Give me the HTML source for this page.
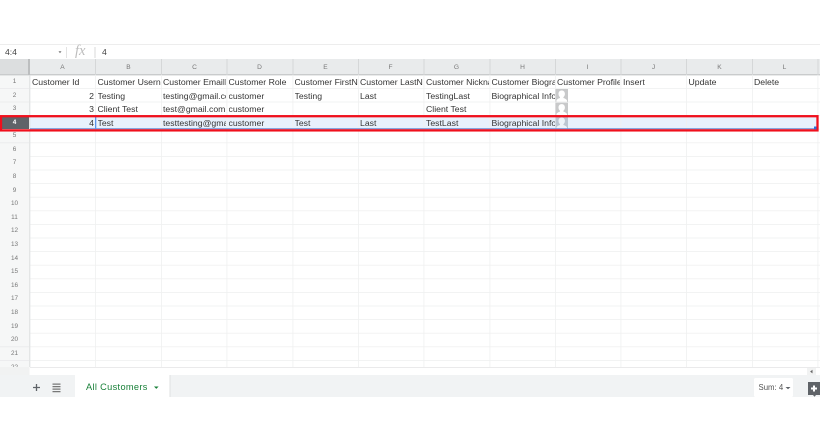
<!DOCTYPE html>
<html><head><meta charset="utf-8"><style>
html,body{margin:0;padding:0;background:#fff}
#p{position:relative;width:820px;height:441px;overflow:hidden;background:#fff;font-family:"Liberation Sans",sans-serif;filter:blur(.3px)}
#p svg{position:absolute;left:0;top:0}
.c{position:absolute;height:13px;line-height:13px;font-size:8.7px;color:#353535;white-space:nowrap;overflow:hidden}
.h{position:absolute;top:61px;height:14px;line-height:14px;font-size:6.6px;color:#777;text-align:center}
.n{position:absolute;left:0;width:29px;height:12px;line-height:12px;font-size:6.4px;color:#777;text-align:center}
</style></head><body><div id="p">
<svg width="820" height="441" viewBox="0 0 820 441">
<rect x="0" y="44" width="820" height="1" fill="#ededed"/>
<rect x="0" y="59" width="820" height="16" fill="#e9ebec"/>
<rect x="0" y="59" width="29" height="16" fill="#dcdedf"/>
<rect x="0" y="75" width="29.5" height="300" fill="#f6f7f7"/>
<rect x="0" y="74" width="820" height="1.4" fill="#c9cbcc"/>
<rect x="28" y="59" width="2" height="16" fill="#bcbebf"/>
<rect x="66" y="47" width="1" height="11" fill="#e3e3e3"/>
<rect x="94.500" y="47" width="1" height="11" fill="#d8d8d8"/>
<!-- selected row -->
<rect x="30" y="116" width="788" height="13" fill="#e8f1fc"/>
<rect x="0" y="116" width="29" height="13" fill="#5f6368"/>
<!-- grid -->
<g fill="#eff0f0">
<rect x="30" y="88" width="790" height=".8"/><rect x="30" y="101.6" width="790" height=".8"/><rect x="30" y="115.2" width="790" height=".8"/><rect x="30" y="128.8" width="790" height=".8"/><rect x="30" y="142.4" width="790" height=".8"/><rect x="30" y="156" width="790" height=".8"/><rect x="30" y="169.6" width="790" height=".8"/><rect x="30" y="183.2" width="790" height=".8"/><rect x="30" y="196.8" width="790" height=".8"/><rect x="30" y="210.4" width="790" height=".8"/><rect x="30" y="224" width="790" height=".8"/><rect x="30" y="237.6" width="790" height=".8"/><rect x="30" y="251.2" width="790" height=".8"/><rect x="30" y="264.8" width="790" height=".8"/><rect x="30" y="278.4" width="790" height=".8"/><rect x="30" y="292" width="790" height=".8"/><rect x="30" y="305.6" width="790" height=".8"/><rect x="30" y="319.2" width="790" height=".8"/><rect x="30" y="332.8" width="790" height=".8"/><rect x="30" y="346.4" width="790" height=".8"/><rect x="30" y="360" width="790" height=".8"/>
<rect x="95" y="75" width=".8" height="293"/><rect x="161" y="75" width=".8" height="293"/><rect x="226.5" y="75" width=".8" height="293"/><rect x="292.5" y="75" width=".8" height="293"/><rect x="358" y="75" width=".8" height="293"/><rect x="423.5" y="75" width=".8" height="293"/><rect x="489.5" y="75" width=".8" height="293"/><rect x="555" y="75" width=".8" height="293"/><rect x="620.5" y="75" width=".8" height="293"/><rect x="686" y="75" width=".8" height="293"/><rect x="752" y="75" width=".8" height="293"/><rect x="817.5" y="75" width=".8" height="293"/>
</g>
<g fill="#d5d7d8">
<rect x="95" y="59" width="1" height="16"/><rect x="161" y="59" width="1" height="16"/><rect x="226.5" y="59" width="1" height="16"/><rect x="292.5" y="59" width="1" height="16"/><rect x="358" y="59" width="1" height="16"/><rect x="423.5" y="59" width="1" height="16"/><rect x="489.5" y="59" width="1" height="16"/><rect x="555" y="59" width="1" height="16"/><rect x="620.5" y="59" width="1" height="16"/><rect x="686" y="59" width="1" height="16"/><rect x="752" y="59" width="1" height="16"/><rect x="817.5" y="59" width="1" height="16"/>
</g>
<rect x="29.3" y="75" width="1" height="300" fill="#dcdedf"/>
<rect x="0" y="88" width="29" height=".8" fill="#e9eaeb"/><rect x="0" y="101.6" width="29" height=".8" fill="#e9eaeb"/><rect x="0" y="142.4" width="29" height=".8" fill="#e9eaeb"/><rect x="0" y="346.4" width="29" height=".8" fill="#e9eaeb"/><rect x="0" y="360" width="29" height=".8" fill="#e9eaeb"/>
<!-- scroll strip -->
<rect x="0" y="367" width="820" height="8" fill="#fff"/>
<rect x="0" y="367" width="29.5" height="8" fill="#f1f2f2"/>
<rect x="30" y="367" width="790" height=".8" fill="#e4e5e6"/>
<rect x="807" y="368" width="9" height="7" fill="#f1f2f2"/>
<path d="M812.500 369.800l-2.400 1.800 2.400 1.800z" fill="#666"/>
<!-- bottom bar -->
<rect x="0" y="375" width="820" height="22" fill="#f1f3f4"/>
<rect x="75" y="375" width="95" height="22" fill="#fff"/>
<rect x="169.500" y="375" width="1" height="22" fill="#dfe1e2"/>
<rect x="754" y="378" width="39" height="19" rx="1.500" fill="#fff"/>
<path d="M33 387.500h7M36.500 384v7" stroke="#5f6368" stroke-width="1.300" fill="none"/>
<path d="M52.500 383.500h8v1.300h-8zM52.500 386h8v1.300h-8zM52.500 388.500h8v1.300h-8zM52.500 391h8v1.300h-8z" fill="#777"/>
<path d="M154 386.500h4.600l-2.300 2.400z" fill="#188038"/>
<path d="M785.500 387h5l-2.500 2.300z" fill="#5f6368"/>
<path d="M808 382h12v13h-4l-1.500 1.800L813 395h-5z" fill="#5f6368"/>
<path d="M814 385.500v6M811 388.500h6" stroke="#fff" stroke-width="2" fill="none"/>
<!-- formula bar -->
<path d="M58.500 51.300h3l-1.500 2z" fill="#777"/>
<!-- avatars -->
<g>
<rect x="555.500" y="89" width="12.500" height="12.800" fill="#c8c9ca"/>
<path d="M561.700 90.500c1.900 0 3.200 1.300 3.200 3.300 0 1.500-.6 2.700-1.500 3.400v.8c1.600.5 3.200 1.300 3.600 2.500v1.300h-10.600v-1.300c.4-1.200 2-2 3.600-2.500v-.8c-.9-.7-1.500-1.900-1.500-3.400 0-2 1.300-3.300 3.200-3.300z" fill="#fff"/>
<rect x="555.500" y="102.600" width="12.500" height="12.800" fill="#c8c9ca"/>
<path d="M561.700 104.100c1.900 0 3.200 1.300 3.200 3.300 0 1.500-.6 2.700-1.500 3.400v.8c1.600.5 3.200 1.300 3.600 2.500v1.300h-10.600v-1.300c.4-1.200 2-2 3.600-2.500v-.8c-.9-.7-1.500-1.900-1.500-3.400 0-2 1.300-3.300 3.200-3.300z" fill="#fff"/>
<rect x="555.500" y="116" width="12.500" height="13" fill="#bcc6d2"/>
<path d="M561.700 117.500c1.900 0 3.200 1.300 3.200 3.300 0 1.500-.6 2.700-1.500 3.400v.8c1.600.5 3.200 1.300 3.600 2.500v1.500h-10.600v-1.500c.4-1.200 2-2 3.600-2.500v-.8c-.9-.7-1.500-1.900-1.500-3.400 0-2 1.300-3.300 3.200-3.300z" fill="#eef3f9"/>
</g>
<!-- selection lines -->
<rect x="30" y="128.200" width="786" height="1.100" fill="#6f93d8"/>
<rect x="95" y="117" width="1.300" height="12" fill="#5b94ec"/>
<!-- red box -->
<rect x="1" y="116.200" width="816.500" height="14.200" fill="none" stroke="#f00f1c" stroke-width="2.300"/>
<rect x="814" y="126.500" width="2.500" height="2.800" fill="#2b6fd8"/>
</svg>

<div class="c" style="left:5px;top:46px;font-size:8.6px;color:#444">4:4</div>
<div class="c" style="left:102px;top:46px;font-size:8.6px;color:#444">4</div>
<div style="position:absolute;left:75px;top:43px;font:italic 14.500px 'Liberation Serif',serif;color:#bdbdbd">fx</div>

<div class="h" style="left:30px;width:65px">A</div><div class="h" style="left:96px;width:65px">B</div><div class="h" style="left:162px;width:65px">C</div><div class="h" style="left:227px;width:65px">D</div><div class="h" style="left:293px;width:65px">E</div><div class="h" style="left:358px;width:65px">F</div><div class="h" style="left:424px;width:65px">G</div><div class="h" style="left:490px;width:65px">H</div><div class="h" style="left:555px;width:65px">I</div><div class="h" style="left:621px;width:65px">J</div><div class="h" style="left:687px;width:65px">K</div><div class="h" style="left:752px;width:65px">L</div>

<div class="n" style="top:76px">1</div><div class="n" style="top:90px">2</div><div class="n" style="top:103px">3</div><div class="n" style="top:117px;color:#fff;font-weight:bold">4</div><div class="n" style="top:130px">5</div><div class="n" style="top:144px">6</div><div class="n" style="top:157px">7</div><div class="n" style="top:171px">8</div><div class="n" style="top:185px">9</div><div class="n" style="top:198px">10</div><div class="n" style="top:212px">11</div><div class="n" style="top:225px">12</div><div class="n" style="top:239px">13</div><div class="n" style="top:253px">14</div><div class="n" style="top:266px">15</div><div class="n" style="top:280px">16</div><div class="n" style="top:293px">17</div><div class="n" style="top:307px">18</div><div class="n" style="top:321px">19</div><div class="n" style="top:334px">20</div><div class="n" style="top:348px">21</div><div class="n" style="top:362px;height:5px;overflow:hidden">22</div>

<div class="c" style="left:32px;top:76px;width:62px">Customer Id</div>
<div class="c" style="left:97.500px;top:76px;width:63px">Customer Username</div>
<div class="c" style="left:163px;top:76px;width:63px">Customer EmailId</div>
<div class="c" style="left:228.500px;top:76px;width:63px">Customer Role</div>
<div class="c" style="left:294.500px;top:76px;width:63px">Customer FirstName</div>
<div class="c" style="left:360px;top:76px;width:63px">Customer LastName</div>
<div class="c" style="left:426px;top:76px;width:63px">Customer Nickname</div>
<div class="c" style="left:491.500px;top:76px;width:63px">Customer Biography</div>
<div class="c" style="left:557px;top:76px;width:63px">Customer Profile</div>
<div class="c" style="left:623px;top:76px;width:63px">Insert</div>
<div class="c" style="left:688.500px;top:76px;width:63px">Update</div>
<div class="c" style="left:754px;top:76px;width:63px">Delete</div>

<div class="c" style="left:32px;top:90px;width:62px;text-align:right">2</div>
<div class="c" style="left:97.500px;top:90px;width:63px">Testing</div>
<div class="c" style="left:163px;top:90px;width:63px">testing@gmail.com</div>
<div class="c" style="left:228.500px;top:90px;width:63px">customer</div>
<div class="c" style="left:294.500px;top:90px;width:63px">Testing</div>
<div class="c" style="left:360px;top:90px;width:63px">Last</div>
<div class="c" style="left:426px;top:90px;width:63px">TestingLast</div>
<div class="c" style="left:491.500px;top:90px;width:63px">Biographical Info</div>

<div class="c" style="left:32px;top:103px;width:62px;text-align:right">3</div>
<div class="c" style="left:97.500px;top:103px;width:63px">Client Test</div>
<div class="c" style="left:163px;top:103px;width:63px">test@gmail.com</div>
<div class="c" style="left:228.500px;top:103px;width:63px">customer</div>
<div class="c" style="left:426px;top:103px;width:63px">Client Test</div>

<div class="c" style="left:32px;top:117px;width:62px;text-align:right">4</div>
<div class="c" style="left:97.500px;top:117px;width:63px">Test</div>
<div class="c" style="left:163px;top:117px;width:63px">testtesting@gmail.com</div>
<div class="c" style="left:228.500px;top:117px;width:63px">customer</div>
<div class="c" style="left:294.500px;top:117px;width:63px">Test</div>
<div class="c" style="left:360px;top:117px;width:63px">Last</div>
<div class="c" style="left:426px;top:117px;width:63px">TestLast</div>
<div class="c" style="left:491.500px;top:117px;width:63px">Biographical Info</div>

<div class="c" style="left:86px;top:381px;font-size:9.200px;color:#188038;letter-spacing:.35px">All Customers</div>
<div class="c" style="left:758.500px;top:381px;font-size:7.800px;color:#555">Sum: 4</div>
</div></body></html>
